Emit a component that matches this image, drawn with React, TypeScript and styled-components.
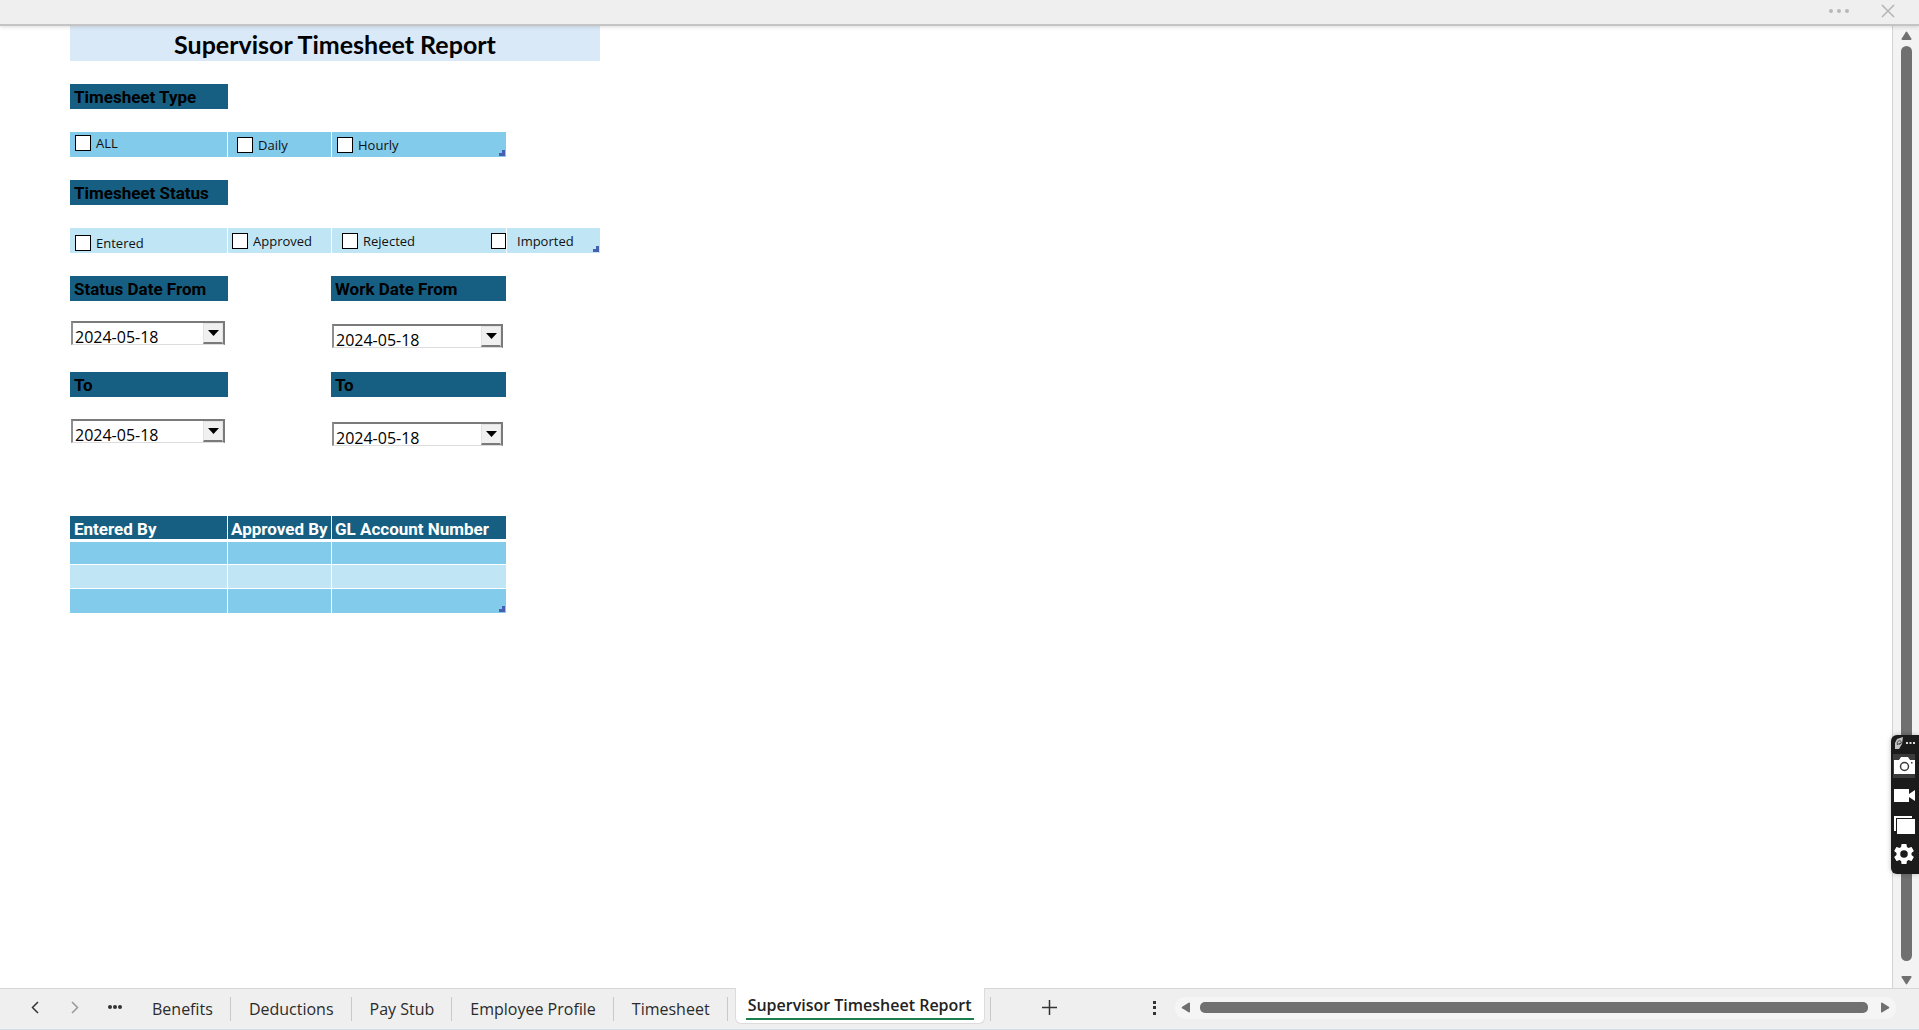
import React from "react";
import styled, { createGlobalStyle } from "styled-components";

const GlobalStyle = createGlobalStyle`
  *, *::before, *::after { box-sizing: border-box; }
  body { margin: 0; background: #fff; font-family: "Open Sans", "Noto Sans", sans-serif; color: #111; }
  button { margin: 0; padding: 0; border: 0; background: none; font: inherit; color: inherit; }
`;

const colors = {
  chrome: "#efefef",
  heading: "#165f82",
  band: "#83cbeb",
  bandLight: "#c0e6f5",
  title: "#dae9f8",
  thumb: "#707070",
};

const columns = "158px 103px 175px 94px";

const Window = styled.div`
  display: flex;
  flex-direction: column;
  height: 100vh;
  overflow: hidden;
`;

const TopBar = styled.header`
  display: flex;
  flex: none;
  justify-content: flex-end;
  align-items: center;
  gap: 32px;
  height: 26px;
  padding: 0 24px 2px 0;
  background: ${colors.chrome};
  border-bottom: 2px solid #c4c4c4;
  box-shadow: 0 1px 4px rgba(0, 0, 0, 0.14);
  z-index: 1;
`;

const IconButton = styled.button<{ $width?: number }>`
  display: flex;
  flex: none;
  align-items: center;
  justify-content: center;
  width: ${(p) => (p.$width ? `${p.$width}px` : "auto")};
`;

const Body = styled.div`
  position: relative;
  display: flex;
  flex: 1;
  min-height: 0;
`;

const Sheet = styled.main`
  flex: 1;
  min-width: 0;
  padding-left: 70px;
  overflow: hidden;
`;

const Title = styled.h1`
  width: 530px;
  height: 35px;
  margin: 0 0 23px;
  background: ${colors.title};
  color: #000;
  font: 700 25px/36px Lato, sans-serif;
  text-align: center;
`;

const Heading = styled.h2`
  width: 158px;
  height: 25px;
  margin: 0;
  padding-left: 4px;
  background: ${colors.heading};
  color: #000;
  font: 700 17px/26px Roboto, sans-serif;
  white-space: nowrap;
`;

const DateHeading = styled(Heading)<{ $column: number }>`
  grid-column: ${(p) => p.$column};
  grid-row: 1;
  width: auto;
`;

const Band = styled.div<{ $light?: boolean; $cells: number }>`
  position: relative;
  display: grid;
  grid-template-columns: ${(p) => columns.split(" ").slice(0, p.$cells).join(" ")};
  width: max-content;
  height: 25px;
  margin: 23px 0;
  background: ${(p) => (p.$light ? colors.bandLight : colors.band)};
`;

const BandCell = styled.div<{ $inset: number; $align?: string }>`
  display: flex;
  align-items: ${(p) => p.$align ?? "center"};
  padding: 3px 0 2px ${(p) => p.$inset}px;

  &:first-child {
    border-right: 1px solid #fff;
  }
  &:nth-child(n + 3) {
    border-left: 1px solid #fff;
  }
`;

const Option = styled.label`
  display: flex;
  align-items: center;
  gap: 5px;
  height: 16px;
  font-size: 13px;
  line-height: 16px;
  white-space: nowrap;
`;

const CheckBox = styled.input.attrs({ type: "checkbox" })`
  appearance: none;
  flex: none;
  width: 16px;
  height: 16px;
  margin: 0;
  border: 1px solid #000;
  background: #fff;

  &:checked {
    background: #000;
    box-shadow: inset 0 0 0 3px #fff;
  }
`;

const TrailingCheckBox = styled(CheckBox)`
  width: 15px;
  margin-left: auto;
`;

const Corner = styled.svg`
  position: absolute;
  right: 1px;
  bottom: 1px;
  width: 6px;
  height: 6px;
  fill: #4560b0;
`;

const DateRow = styled.div<{ $height: number; $gap: number }>`
  display: grid;
  grid-template-columns: ${columns};
  grid-template-rows: 25px auto;
  row-gap: ${(p) => p.$gap}px;
  align-items: start;
  height: ${(p) => p.$height}px;
`;

const DateCell = styled.div<{ $column: number }>`
  grid-column: ${(p) => p.$column};
  grid-row: 2;
  padding: ${(p) => (p.$column === 3 ? "3px" : "0")} 3px 0 1px;
`;

const Combo = styled.div`
  display: flex;
  height: 24px;
  border: 2px solid #7a7a7a;
  border-left-color: #8f8f8f;
  border-bottom: 1px solid #dcdcdc;
  background: #fff;
`;

const DateSelect = styled.select`
  appearance: none;
  flex: 1;
  min-width: 0;
  height: 21px;
  padding: 7px 0 0 2px;
  border: 0;
  border-radius: 0;
  background: transparent;
  color: #000;
  font: 16px/14px "Open Sans", sans-serif;
`;

const DropButton = styled.button`
  display: flex;
  align-items: center;
  justify-content: center;
  width: 20px;
  background: #f0f0f0;
  border-style: solid;
  border-width: 1px 1px 2px;
  border-color: #e3e3e3 #e3e3e3 #7a7a7a;
`;

const Table = styled.table`
  width: 436px;
  table-layout: fixed;
  border-spacing: 0;
`;

const TableFrame = styled.div`
  position: relative;
  width: max-content;
`;

const Th = styled.th`
  height: 26px;
  padding: 3px 0 0 4px;
  background: ${colors.heading};
  border-bottom: 3px solid #fff;
  color: #fff;
  font: 700 17px/20px Roboto, sans-serif;
  text-align: left;
  white-space: nowrap;

  &:nth-child(2) {
    padding-left: 3px;
  }
  &:first-child {
    border-right: 1px solid #fff;
  }
  &:last-child {
    padding-left: 3px;
    border-left: 1px solid #fff;
  }
`;

const Td = styled.td`
  height: 24px;
  padding: 0;
  background: ${colors.band};
  border-bottom: 1px solid #fff;

  &:first-child {
    border-right: 1px solid #fff;
  }
  &:last-child {
    border-left: 1px solid #fff;
  }
  tr:first-child > & {
    height: 23px;
  }
  tr:nth-child(even) > & {
    background: ${colors.bandLight};
  }
  tr:last-child > & {
    border-bottom: 0;
  }
`;

const VerticalScroll = styled.div`
  display: flex;
  flex: none;
  flex-direction: column;
  align-items: center;
  gap: 6px;
  width: 27px;
  padding: 5px 0 3px 1px;
  background: #f3f3f3;
  border-left: 1px solid #d4d4d4;
`;

const VerticalThumb = styled.div`
  flex: 1;
  width: 11px;
  margin-bottom: 9px;
  border-radius: 6px;
  background: ${colors.thumb};
`;

const CapturePanel = styled.aside`
  position: absolute;
  right: 0;
  bottom: 114px;
  display: flex;
  flex-direction: column;
  width: 28px;
  height: 139px;
  padding-bottom: 5px;
  border-radius: 6px 0 0 6px;
  background: #1b1b1b;
  color: #fff;
  box-shadow: 0 0 5px rgba(0, 0, 0, 0.25);
`;

const PanelTop = styled.div`
  display: flex;
  align-items: center;
  justify-content: center;
  height: 16px;
`;

const PanelButton = styled.button<{ $active?: boolean }>`
  display: flex;
  align-items: center;
  justify-content: center;
  flex: 1;
  margin: 0 4px 0 2px;
  background: ${(p) => (p.$active ? "#3b3b3b" : "transparent")};
  background-clip: content-box;
  padding: 3px 0;

  svg {
    flex: none;
    margin: -3px 0;
  }
`;

const Footer = styled.footer`
  display: flex;
  flex: none;
  height: 42px;
  background: ${colors.chrome};
  border-top: 1px solid #d6d6d6;
  border-bottom: 1px solid #d3dde6;
`;

const TabNav = styled.div`
  display: flex;
  align-items: center;
  gap: 26px;
  width: 134px;
  padding: 0 12px 4px 28px;
`;

const Tabs = styled.nav`
  display: flex;
`;

const Tab = styled.a`
  position: relative;
  height: 40px;
  padding: 0 18px;
  color: #2b2b2b;
  font-size: 16px;
  line-height: 40px;
  text-decoration: none;
  white-space: nowrap;

  &::after {
    content: "";
    position: absolute;
    top: 8px;
    right: 0;
    width: 1px;
    height: 24px;
    background: #c9c9c9;
  }
`;

const ActiveTab = styled.a`
  min-width: 250px;
  height: 36px;
  margin: -1px 5px 0 7px;
  padding: 0 10px;
  background: #fff;
  border: 1px solid #dcdcdc;
  border-top: 0;
  border-radius: 0 0 6px 6px;
  color: #222;
  font-size: 16px;
  font-weight: 600;
  line-height: 34px;
  text-align: center;
  text-decoration: none;
  white-space: nowrap;

  span {
    display: block;
    height: 32px;
    border-bottom: 2px solid #1b7f4b;
  }
`;

const AddSheet = styled.div`
  display: flex;
  align-items: center;
  position: relative;
  padding: 0 0 4px 52px;

  &::before {
    content: "";
    position: absolute;
    left: 0;
    top: 8px;
    width: 1px;
    height: 24px;
    background: #c9c9c9;
  }
`;

const HorizontalArea = styled.div`
  display: flex;
  align-items: center;
  gap: 18px;
  width: 40%;
  margin-left: auto;
  padding: 0 23px 3px 0;
`;

const HorizontalScroll = styled.div`
  display: flex;
  flex: 1;
  align-items: center;
  gap: 10px;
  height: 22px;
  padding: 0 6px;
  border-radius: 10px;
  background: #f5f5f5;
`;

const HorizontalThumb = styled.div`
  flex: 1;
  height: 11px;
  margin-right: 3px;
  border-radius: 5px;
  background: ${colors.thumb};
`;

function CornerMark() {
  return (
    <Corner viewBox="0 0 6 6" aria-hidden="true">
      <path d="M3 0h3v6H0V3h3z" />
    </Corner>
  );
}

function Dots({ size, color, gap }: { size: number; color: string; gap: number }) {
  const width = gap * 2 + size;
  return (
    <svg width={width} height={size} viewBox={`0 0 ${width} ${size}`} fill={color}>
      {[0, 1, 2].map((i) => (
        <circle key={i} cx={size / 2 + i * gap} cy={size / 2} r={size / 2} />
      ))}
    </svg>
  );
}

const arrows = {
  up: "M4.7 1.2 .7 7.6Q0 9 1.400 9h8.200Q11 9 10.300 7.600L6.300 1.200Q5.500 0 4.700 1.200z",
  down: "M4.700 7.800.700 1.400Q0 0 1.400 0h8.200Q11 0 10.300 1.400L6.300 7.800Q5.500 9 4.700 7.800z",
  left: "M1.200 4.700 7.600.7Q9 0 9 1.400v8.200Q9 11 7.600 10.300L1.200 6.300Q0 5.500 1.200 4.700z",
  right: "M7.800 4.700 1.400.7Q0 0 0 1.400v8.200Q0 11 1.400 10.300L7.800 6.300Q9 5.500 7.800 4.700z",
};

function Arrow({ to }: { to: keyof typeof arrows }) {
  const upright = to === "up" || to === "down";
  const w = upright ? 11 : 9;
  const h = upright ? 9 : 11;
  return (
    <IconButton aria-label={`Scroll ${to}`}>
      <svg width={w} height={h} viewBox={`0 0 ${w} ${h}`} fill={colors.thumb}>
        <path d={arrows[to]} />
      </svg>
    </IconButton>
  );
}

function DateField({ id, column, label }: { id: string; column: number; label: string }) {
  return (
    <>
      <DateHeading $column={column}>
        <label htmlFor={id}>{label}</label>
      </DateHeading>
      <DateCell $column={column}>
        <Combo>
          <DateSelect id={id} defaultValue="2024-05-18">
            <option>2024-05-18</option>
          </DateSelect>
          <DropButton aria-label="Open calendar">
            <svg width="11" height="6" viewBox="0 0 11 6">
              <path d="M0 0h11L5.500 6z" />
            </svg>
          </DropButton>
        </Combo>
      </DateCell>
    </>
  );
}

const sheets = ["Benefits", "Deductions", "Pay Stub", "Employee Profile", "Timesheet"];

export default function App() {
  return (
    <Window>
      <GlobalStyle />
      <TopBar>
        <IconButton aria-label="More options">
          <Dots size={4} gap={8} color="#b8b8b8" />
        </IconButton>
        <IconButton aria-label="Close">
          <svg width="14" height="14" viewBox="0 0 14 14" stroke="#b4b4b4" strokeWidth="1.500">
            <path d="M1 1l12 12M13 1L1 13" />
          </svg>
        </IconButton>
      </TopBar>

      <Body>
        <Sheet>
          <Title>Supervisor Timesheet Report</Title>

          <Heading>Timesheet Type</Heading>
          <Band $cells={3}>
            <BandCell $inset={5} $align="flex-start">
              <Option><CheckBox />ALL</Option>
            </BandCell>
            <BandCell $inset={9}>
              <Option><CheckBox />Daily</Option>
            </BandCell>
            <BandCell $inset={5}>
              <Option><CheckBox />Hourly</Option>
            </BandCell>
            <CornerMark />
          </Band>

          <Heading>Timesheet Status</Heading>
          <Band $light $cells={4}>
            <BandCell $inset={5} $align="flex-end">
              <Option><CheckBox />Entered</Option>
            </BandCell>
            <BandCell $inset={4}>
              <Option><CheckBox />Approved</Option>
            </BandCell>
            <BandCell $inset={10}>
              <Option><CheckBox />Rejected</Option>
              <TrailingCheckBox id="imported" />
            </BandCell>
            <BandCell $inset={10}>
              <Option htmlFor="imported">Imported</Option>
            </BandCell>
            <CornerMark />
          </Band>

          <DateRow $height={96} $gap={20}>
            <DateField id="status-from" column={1} label="Status Date From" />
            <DateField id="work-from" column={3} label="Work Date From" />
          </DateRow>
          <DateRow $height={144} $gap={22}>
            <DateField id="status-to" column={1} label="To" />
            <DateField id="work-to" column={3} label="To" />
          </DateRow>

          <TableFrame>
            <Table>
              <colgroup>
                <col width="158" />
                <col width="103" />
                <col width="175" />
              </colgroup>
              <thead>
                <tr>
                  <Th>Entered By</Th>
                  <Th>Approved By</Th>
                  <Th>GL Account Number</Th>
                </tr>
              </thead>
              <tbody>
                {[1, 2, 3].map((row) => (
                  <tr key={row}>
                    <Td />
                    <Td />
                    <Td />
                  </tr>
                ))}
              </tbody>
            </Table>
            <CornerMark />
          </TableFrame>
        </Sheet>

        <VerticalScroll>
          <Arrow to="up" />
          <VerticalThumb />
          <Arrow to="down" />
        </VerticalScroll>

        <CapturePanel>
          <PanelTop>
            <svg width="22" height="12" viewBox="0 0 22 12" fill="none">
              <path d="M3 2l6-2-1 7-3 5H1V6z" fill="#c4c4c4" />
              <path d="M3.500 8c-1-3 1-5 3-4s0 4-2 3l3-1" stroke="#444" />
              <path d="M12 5h2v2h-2zM15.500 5h2v2h-2zM19 5h2v2h-2z" fill="#ddd" />
            </svg>
          </PanelTop>
          <PanelButton $active aria-label="Take picture">
            <svg width="21" height="17" viewBox="0 0 21 17">
              <path d="M0 3h5l2-3h7l2 3h5v14H0z" fill="#fff" />
              <circle cx="10.500" cy="9.500" r="4" fill="none" stroke="#3b3b3b" strokeWidth="1.500" />
              <path d="M17 5h1.500v1.500H17z" fill="#3b3b3b" />
            </svg>
          </PanelButton>
          <PanelButton aria-label="Record video">
            <svg width="21" height="13" viewBox="0 0 21 13" fill="#fff">
              <path d="M0 0h15v5l6-4v11l-6-4v5H0z" />
            </svg>
          </PanelButton>
          <PanelButton aria-label="Captures">
            <svg width="21" height="18" viewBox="0 0 21 18" fill="#fff">
              <path d="M0 0h18v2H2v13H0z" />
              <path d="M3 3h18v15H3z" />
            </svg>
          </PanelButton>
          <PanelButton aria-label="Settings">
            <svg width="22" height="22" viewBox="1.500 1.500 21 21" fill="#fff">
              <path d="M19.140 12.940c.04-.3.06-.61.06-.94s-.02-.64-.07-.94l2.030-1.580a.49.49 0 0 0 .12-.61l-1.920-3.320a.49.49 0 0 0-.59-.22l-2.390.96a7 7 0 0 0-1.620-.94l-.36-2.540a.48.48 0 0 0-.48-.41h-3.840a.47.47 0 0 0-.47.41l-.36 2.540a7.300 7.300 0 0 0-1.620.94l-2.390-.96a.48.48 0 0 0-.59.22L2.740 8.870a.47.47 0 0 0 .12.61l2.030 1.580a6 6 0 0 0 0 1.880l-2.030 1.580a.49.49 0 0 0-.12.61l1.920 3.320c.12.22.37.29.59.22l2.390-.96c.5.38 1.030.7 1.620.94l.36 2.540c.05.24.24.41.48.41h3.840c.24 0 .44-.17.47-.41l.36-2.540a7 7 0 0 0 1.620-.94l2.390.96c.22.08.47 0 .59-.22l1.920-3.320a.47.47 0 0 0-.12-.61zM12 15.600a3.600 3.600 0 1 1 0-7.200 3.600 3.600 0 0 1 0 7.200z" />
            </svg>
          </PanelButton>
        </CapturePanel>
      </Body>

      <Footer>
        <TabNav>
          <IconButton $width={14} aria-label="Previous sheet">
            <svg width="8" height="13" viewBox="0 0 8 13" fill="none" stroke="#333" strokeWidth="1.500">
              <path d="M7 1L1.500 6.500 7 12" />
            </svg>
          </IconButton>
          <IconButton $width={14} aria-label="Next sheet">
            <svg width="8" height="13" viewBox="0 0 8 13" fill="none" stroke="#999" strokeWidth="1.500">
              <path d="M1 1l5.500 5.500L1 12" />
            </svg>
          </IconButton>
          <IconButton $width={14} aria-label="All sheets">
            <Dots size={4} gap={5} color="#333" />
          </IconButton>
        </TabNav>
        <Tabs>
          {sheets.map((name) => (
            <Tab key={name} href="#">{name}</Tab>
          ))}
          <ActiveTab href="#" aria-current="page">
            <span>Supervisor Timesheet Report</span>
          </ActiveTab>
        </Tabs>
        <AddSheet>
          <IconButton aria-label="Add sheet">
            <svg width="15" height="15" viewBox="0 0 15 15" stroke="#333" strokeWidth="1.500">
              <path d="M7.500 0v15M0 7.500h15" />
            </svg>
          </IconButton>
        </AddSheet>
        <HorizontalArea>
          <IconButton $width={6} aria-label="Resize tabs">
            <svg width="3" height="14" viewBox="0 0 3 14" fill="#333">
              <path d="M0 0h3v3H0zM0 5h3v3H0zM0 11h3v3H0z" />
            </svg>
          </IconButton>
          <HorizontalScroll>
            <Arrow to="left" />
            <HorizontalThumb />
            <Arrow to="right" />
          </HorizontalScroll>
        </HorizontalArea>
      </Footer>
    </Window>
  );
}
